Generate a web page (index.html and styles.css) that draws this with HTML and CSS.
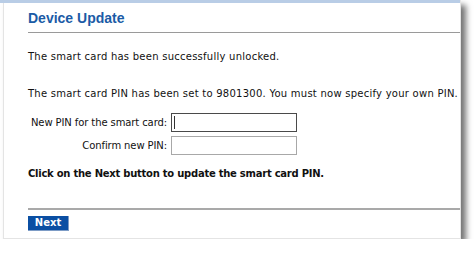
FILE: index.html
```html
<!DOCTYPE html>
<html>
<head>
<meta charset="utf-8">
<link rel="stylesheet" href="styles.css">
</head>
<body>
<div class="card">
  <div class="stripe"></div>
  <h1 class="title">Device Update</h1>
  <div class="rule"></div>
  <div class="content">
    <p class="msg first">The smart card has been successfully unlocked.</p>
    <p class="msg second">The smart card PIN has been set to 9801300. You must now specify your own PIN.</p>
    <div class="form">
      <label class="lbl" for="pin1">New PIN for the smart card:</label>
      <div class="field focused" id="pin1"><span class="caret"></span></div>
      <label class="lbl" for="pin2">Confirm new PIN:</label>
      <div class="field" id="pin2"></div>
    </div>
    <p class="msg strong">Click on the Next button to update the smart card PIN.</p>
  </div>
  <div class="rule rule2"></div>
  <div class="actions">
    <button class="btn">Next</button>
  </div>
</div>
</body>
</html>
```
FILE: styles.css
```css
html, body {
  margin: 0;
  padding: 0;
  background: #ffffff;
}
.card {
  margin-left: 3px;
  width: 456px;
  height: 238px;
  border: 1px solid #e4e4e4;
  border-top: none;
  background: #fff;
  box-shadow: 5px 5px 6px rgba(0,0,0,0.55);
  display: flex;
  flex-direction: column;
}
.stripe {
  height: 3px;
  background: #b9cde6;
  margin-left: -4px;
  flex: none;
}
.title {
  margin: 7px 0 0 24px;
  font-family: "Liberation Sans", Arial, sans-serif;
  font-weight: bold;
  font-size: 14px;
  line-height: 16px;
  color: #1b5ba6;
  flex: none;
}
.rule {
  margin: 6px 0 0 24px;
  height: 1px;
  background: #9a9a9a;
  flex: none;
}
.content {
  padding-left: 24px;
  font-family: "DejaVu Sans", Verdana, sans-serif;
  font-size: 10px;
  color: #111;
  flex: none;
}
.msg {
  margin: 0;
  line-height: 13px;
  white-space: nowrap;
  letter-spacing: 0.25px;
}
.first { margin-top: 17px; }
.second { margin-top: 24px; }
.form {
  margin-top: 13px;
  display: grid;
  grid-template-columns: 139px 126px;
  column-gap: 4px;
  row-gap: 4px;
  align-items: center;
}
.lbl {
  text-align: right;
  white-space: nowrap;
  letter-spacing: -0.1px;
}
.field {
  height: 17px;
  border: 1px solid #a8a8a8;
  background: #fff;
  position: relative;
}
.field.focused {
  border-color: #4a4a4a;
}
.caret {
  position: absolute;
  left: 2px;
  top: 2px;
  width: 1px;
  height: 13px;
  background: #333;
}
.strong {
  margin-top: 12px;
  font-weight: bold;
  letter-spacing: -0.25px;
}
.rule2 {
  margin-top: 28px;
  height: 2px;
  background: #a9a9a9;
}
.actions {
  padding: 6px 0 0 24px;
  flex: none;
}
.btn {
  display: block;
  width: 41px;
  height: 15px;
  padding: 0;
  background: #0b4fa3;
  color: #fff;
  border: none;
  border-right: 1px solid #7d9cc6;
  border-bottom: 1px solid #7d9cc6;
  font-family: "DejaVu Sans", Verdana, sans-serif;
  font-weight: bold;
  font-size: 10px;
  line-height: 14px;
}
```
